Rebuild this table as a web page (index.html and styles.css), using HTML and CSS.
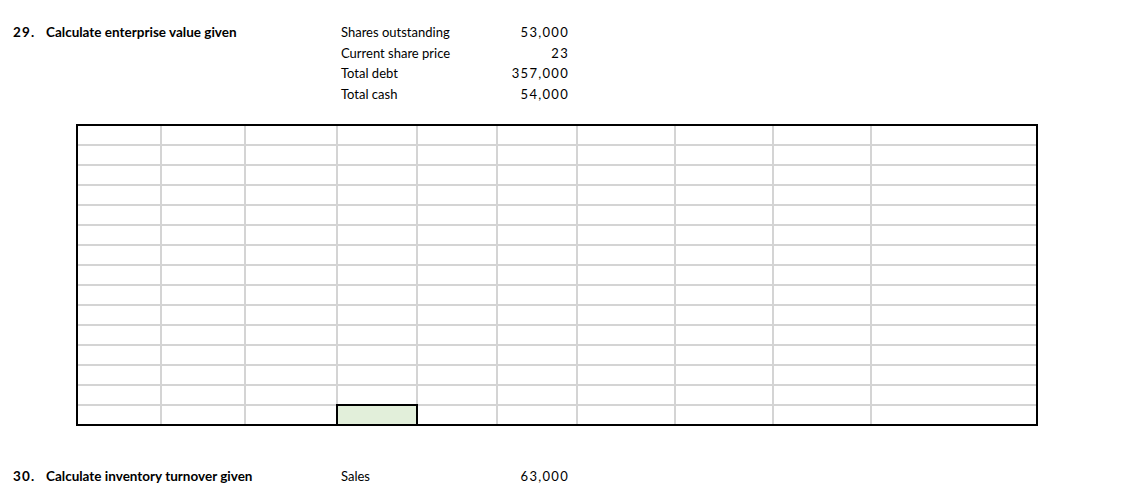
FILE: index.html
```html
<!DOCTYPE html>
<html lang="en">
<head>
<meta charset="utf-8">
<title>Enterprise value</title>
<link rel="stylesheet" href="styles.css">
</head>
<body>
<section class="q q29">
  <div class="q-head">
    <span class="q-num">29.</span>
    <span class="q-title">Calculate enterprise value given</span>
    <div class="givens">
      <span class="g-label">Shares outstanding</span><span class="g-val">53,000</span>
      <span class="g-label">Current share price</span><span class="g-val">23</span>
      <span class="g-label">Total debt</span><span class="g-val">357,000</span>
      <span class="g-label">Total cash</span><span class="g-val">54,000</span>
    </div>
  </div>
  <div class="sheet">
    <div></div><div></div><div></div><div></div><div></div><div></div><div></div><div></div><div></div><div></div>
    <div></div><div></div><div></div><div></div><div></div><div></div><div></div><div></div><div></div><div></div>
    <div></div><div></div><div></div><div></div><div></div><div></div><div></div><div></div><div></div><div></div>
    <div></div><div></div><div></div><div></div><div></div><div></div><div></div><div></div><div></div><div></div>
    <div></div><div></div><div></div><div></div><div></div><div></div><div></div><div></div><div></div><div></div>
    <div></div><div></div><div></div><div></div><div></div><div></div><div></div><div></div><div></div><div></div>
    <div></div><div></div><div></div><div></div><div></div><div></div><div></div><div></div><div></div><div></div>
    <div></div><div></div><div></div><div></div><div></div><div></div><div></div><div></div><div></div><div></div>
    <div></div><div></div><div></div><div></div><div></div><div></div><div></div><div></div><div></div><div></div>
    <div></div><div></div><div></div><div></div><div></div><div></div><div></div><div></div><div></div><div></div>
    <div></div><div></div><div></div><div></div><div></div><div></div><div></div><div></div><div></div><div></div>
    <div></div><div></div><div></div><div></div><div></div><div></div><div></div><div></div><div></div><div></div>
    <div></div><div></div><div></div><div></div><div></div><div></div><div></div><div></div><div></div><div></div>
    <div></div><div></div><div></div><div></div><div></div><div></div><div></div><div></div><div></div><div></div>
    <div></div><div></div><div></div><div class="sel"></div><div></div><div></div><div></div><div></div><div></div><div></div>
  </div>
</section>
<section class="q q30">
  <div class="q-head">
    <span class="q-num">30.</span>
    <span class="q-title">Calculate inventory turnover given</span>
    <div class="givens">
      <span class="g-label">Sales</span><span class="g-val">63,000</span>
    </div>
  </div>
</section>
</body>
</html>
```

FILE: styles.css
```css
html, body {
  margin: 0;
  padding: 0;
  background: #fff;
}

body {
  font-family: Lato, "Liberation Sans", sans-serif;
  font-size: 13px;
  color: #000;
  width: 1128px;
  height: 488px;
  overflow: hidden;
}

.q-head {
  display: grid;
  grid-template-columns: 33px 294px 228px;
  padding-left: 13px;
  align-items: start;
}

.q-num {
  font-weight: 700;
  font-size: 13.5px;
  letter-spacing: 1.2px;
  line-height: 20.5px;
}

.q-title {
  font-weight: 700;
  font-size: 13.5px;
  line-height: 20.5px;
}

.givens {
  display: grid;
  grid-template-columns: 1fr auto;
  grid-auto-rows: 20.5px;
  align-items: center;
}

.g-label {
  padding-left: 1px;
}

.g-val {
  text-align: right;
  letter-spacing: 1.3px;
  margin-right: -1px;
}

.q29 {
  padding-top: 22px;
}

.sheet {
  margin: 20px 0 0 76px;
  width: 958px;
  border: 2px solid #000;
  background: #d4d4d4;
  display: grid;
  grid-template-columns: 82px 82px 90px 78px 78px 78px 96px 96px 96px 164px;
  grid-auto-rows: 18px;
  gap: 2px;
}

.sheet > div {
  background: #fff;
}

.sheet > .sel {
  background: #e2efda;
  outline: 2px solid #000;
}

.q30 {
  padding-top: 40px;
}
```
